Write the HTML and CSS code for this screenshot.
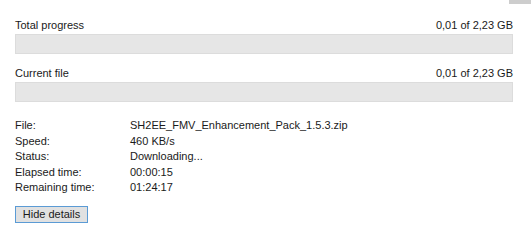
FILE: index.html
```html
<!DOCTYPE html>
<html>
<head>
<meta charset="utf-8">
<link rel="stylesheet" href="styles.css">
</head>
<body>
<div class="corner"></div>
<div class="panel">
  <section class="progress">
    <div class="head"><span>Total progress</span><span>0,01 of 2,23 GB</span></div>
    <div class="bar"></div>
  </section>
  <section class="progress second">
    <div class="head"><span>Current file</span><span>0,01 of 2,23 GB</span></div>
    <div class="bar"></div>
  </section>
  <dl class="details">
    <dt>File:</dt><dd>SH2EE_FMV_Enhancement_Pack_1.5.3.zip</dd>
    <dt>Speed:</dt><dd>460 KB/s</dd>
    <dt>Status:</dt><dd>Downloading...</dd>
    <dt>Elapsed time:</dt><dd>00:00:15</dd>
    <dt>Remaining time:</dt><dd>01:24:17</dd>
  </dl>
  <button class="btn">Hide details</button>
</div>
</body>
</html>
```
FILE: styles.css
```css
html, body {
  margin: 0;
  background: #ffffff;
}
body {
  font-family: "Liberation Sans", Arial, sans-serif;
  font-size: 11px;
  color: #1a1a1a;
  width: 531px;
  height: 243px;
  overflow: hidden;
  position: relative;
}
.corner {
  position: absolute;
  top: 0;
  right: 0;
  width: 22px;
  height: 4px;
  background: #cdcdcd;
}
.panel {
  padding: 19px 18px 0 15px;
}
.progress .head {
  display: flex;
  justify-content: space-between;
  line-height: 13px;
  height: 13px;
  margin-bottom: 2px;
}
.progress .bar {
  height: 20px;
  box-sizing: border-box;
  background: #e6e6e6;
  border: 1px solid #dcdcdc;
}
.progress.second {
  margin-top: 13px;
}
.details {
  margin: 16px 0 0 0;
  display: grid;
  grid-template-columns: 115px 1fr;
  line-height: 15.5px;
}
.details dt, .details dd {
  margin: 0;
}
.btn {
  display: block;
  margin-top: 10px;
  width: 73px;
  height: 17px;
  padding: 0;
  box-sizing: border-box;
  font-family: inherit;
  font-size: 11px;
  color: #1a1a1a;
  background: #e1e1e1;
  border: 1px solid #5b9bd5;
  border-radius: 0;
  line-height: 15px;
}
```
